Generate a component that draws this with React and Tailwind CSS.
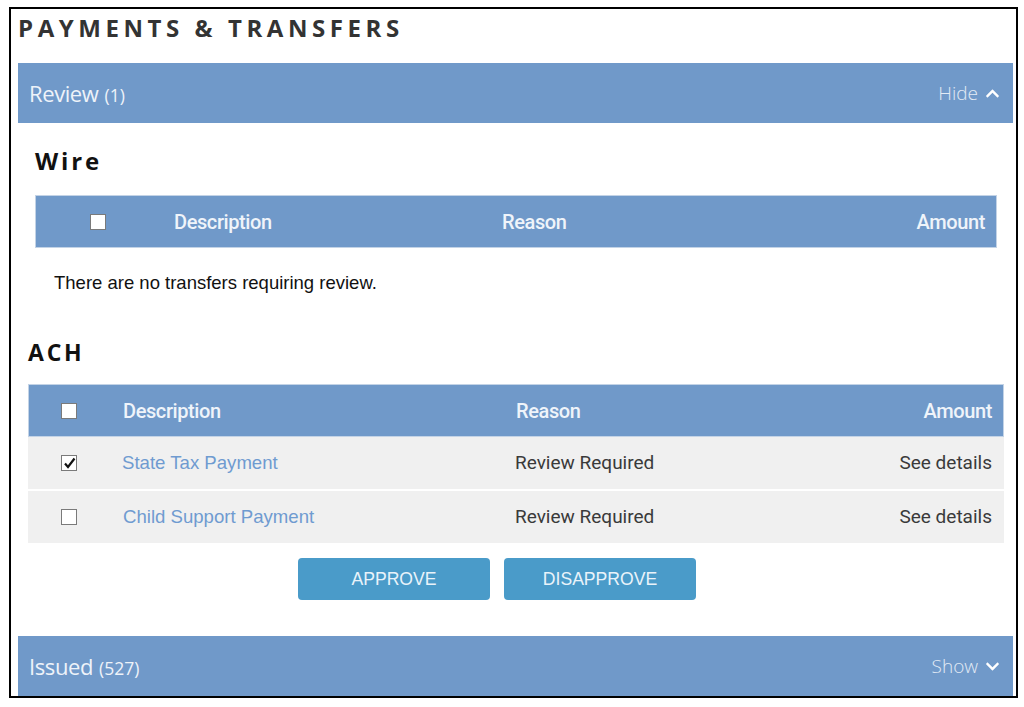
import React from "react";
import { FaChevronUp, FaChevronDown } from "react-icons/fa";

const OPEN = { fontFamily: '"Open Sans", "Liberation Sans", sans-serif' };
const ROBOTO = { fontFamily: 'Roboto, "Liberation Sans", sans-serif' };
const ARIAL = { fontFamily: '"Liberation Sans", Arial, sans-serif' };

function Box({ checked }) {
  return (
    <span className="inline-flex w-[16px] h-[16px] border border-[#7a7a7a] bg-white items-center justify-center shrink-0">
      {checked && (
        <svg width="13" height="13" viewBox="0 0 13 13">
          <path d="M2 6.5 L5 10 L11.5 1.5" fill="none" stroke="#111" strokeWidth="2.2" />
        </svg>
      )}
    </span>
  );
}

function SectionBar({ title, count, action, up }) {
  return (
    <div className="ml-[7px] mr-[3px] h-[60px] bg-[#7099c9] flex items-center justify-between pl-[11px] pr-[13px]">
      <div className="flex items-baseline text-[#eef3f9]" style={OPEN}>
        <span className="text-[22px] tracking-[-0.4px]">{title}</span>
        <span className="text-[17.5px] ml-[6px]">({count})</span>
      </div>
      <div className="flex items-center text-[#e3ebf5]" style={OPEN}>
        <span className="text-[19px] font-light">{action}</span>
        {up ? (
          <FaChevronUp className="ml-[7px] text-white" size={15} />
        ) : (
          <FaChevronDown className="ml-[7px] text-white" size={15} />
        )}
      </div>
    </div>
  );
}

export default function App() {
  return (
    <div className="w-[1024px] h-[707px] bg-white overflow-hidden">
      <div className="ml-[9px] mt-[7px] w-[1009px] h-[691px] border-2 border-black bg-white overflow-hidden">
        {/* Title */}
        <div className="h-[54px] pl-[7px] pt-[7px]">
          <div
            className="text-[24px] leading-[24px] font-bold tracking-[0.19em] text-[#333333]"
            style={OPEN}
          >
            PAYMENTS &amp; TRANSFERS
          </div>
        </div>

        <SectionBar title="Review" count="1" action="Hide" up />

        {/* Wire */}
        <div
          className="mt-[26px] pl-[24px] text-[24px] leading-[24px] font-bold tracking-[0.12em] text-[#111]"
          style={OPEN}
        >
          Wire
        </div>
        <div
          className="mt-[22px] ml-[24px] mr-[19px] h-[53px] bg-[#7099c9] border border-[#c3d3e6] flex items-center text-[20px] font-medium text-[#eff4fa]"
          style={ROBOTO}
        >
          <div className="w-[138px] pl-[54px] flex items-center">
            <Box />
          </div>
          <div className="w-[328px] tracking-[-0.4px]">Description</div>
          <div className="flex-1 tracking-[-0.4px]">Reason</div>
          <div className="pr-[11px] tracking-[-0.4px]">Amount</div>
        </div>
        <div className="mt-[24px] pl-[43px] text-[18.5px] leading-[22px] text-[#111]" style={ARIAL}>
          There are no transfers requiring review.
        </div>

        {/* ACH */}
        <div
          className="mt-[46px] pl-[17px] text-[23px] leading-[24px] font-bold tracking-[0.12em] text-[#111]"
          style={OPEN}
        >
          ACH
        </div>
        <div className="mt-[20px] ml-[17px] mr-[12px]">
          <div
            className="h-[53px] bg-[#7099c9] border border-[#c3d3e6] flex items-center text-[20px] font-medium text-[#eff4fa]"
            style={ROBOTO}
          >
            <div className="w-[94px] pl-[32px] flex items-center">
              <Box />
            </div>
            <div className="w-[393px] tracking-[-0.4px]">Description</div>
            <div className="flex-1 tracking-[-0.4px]">Reason</div>
            <div className="pr-[11px] tracking-[-0.4px]">Amount</div>
          </div>
          {[
            { d: "State Tax Payment", c: true },
            { d: "Child Support Payment", c: false, off: 1 },
          ].map((r, i) => (
            <div
              key={i}
              className={`bg-[#f0f0f0] flex items-center ${i === 0 ? "border-b-2 border-white h-[54px]" : "h-[52px]"}`}
            >
              <div className="w-[94px] pl-[33px] flex items-center">
                <Box checked={r.c} />
              </div>
              <div
                className={`w-[393px] text-[18.6px] text-[#6f9bd0] ${r.off ? "pl-[1px]" : ""}`}
                style={ARIAL}
              >
                {r.d}
              </div>
              <div className="flex-1 text-[19px] text-[#3a3a3a]" style={ROBOTO}>
                Review Required
              </div>
              <div className="pr-[12px] text-[19px] text-[#3a3a3a]" style={ROBOTO}>
                See details
              </div>
            </div>
          ))}
        </div>

        {/* Buttons */}
        <div className="mt-[15px] ml-[287px] flex gap-[14px]" style={ARIAL}>
          <button className="w-[192px] h-[42px] rounded-[4px] bg-[#4a9bc9] text-[#e9f3fa] text-[17.6px]">
            APPROVE
          </button>
          <button className="w-[192px] h-[42px] rounded-[4px] bg-[#4a9bc9] text-[#e9f3fa] text-[17.6px]">
            DISAPPROVE
          </button>
        </div>

        <div className="mt-[36px]">
          <SectionBar title="Issued" count="527" action="Show" />
        </div>
      </div>
    </div>
  );
}
